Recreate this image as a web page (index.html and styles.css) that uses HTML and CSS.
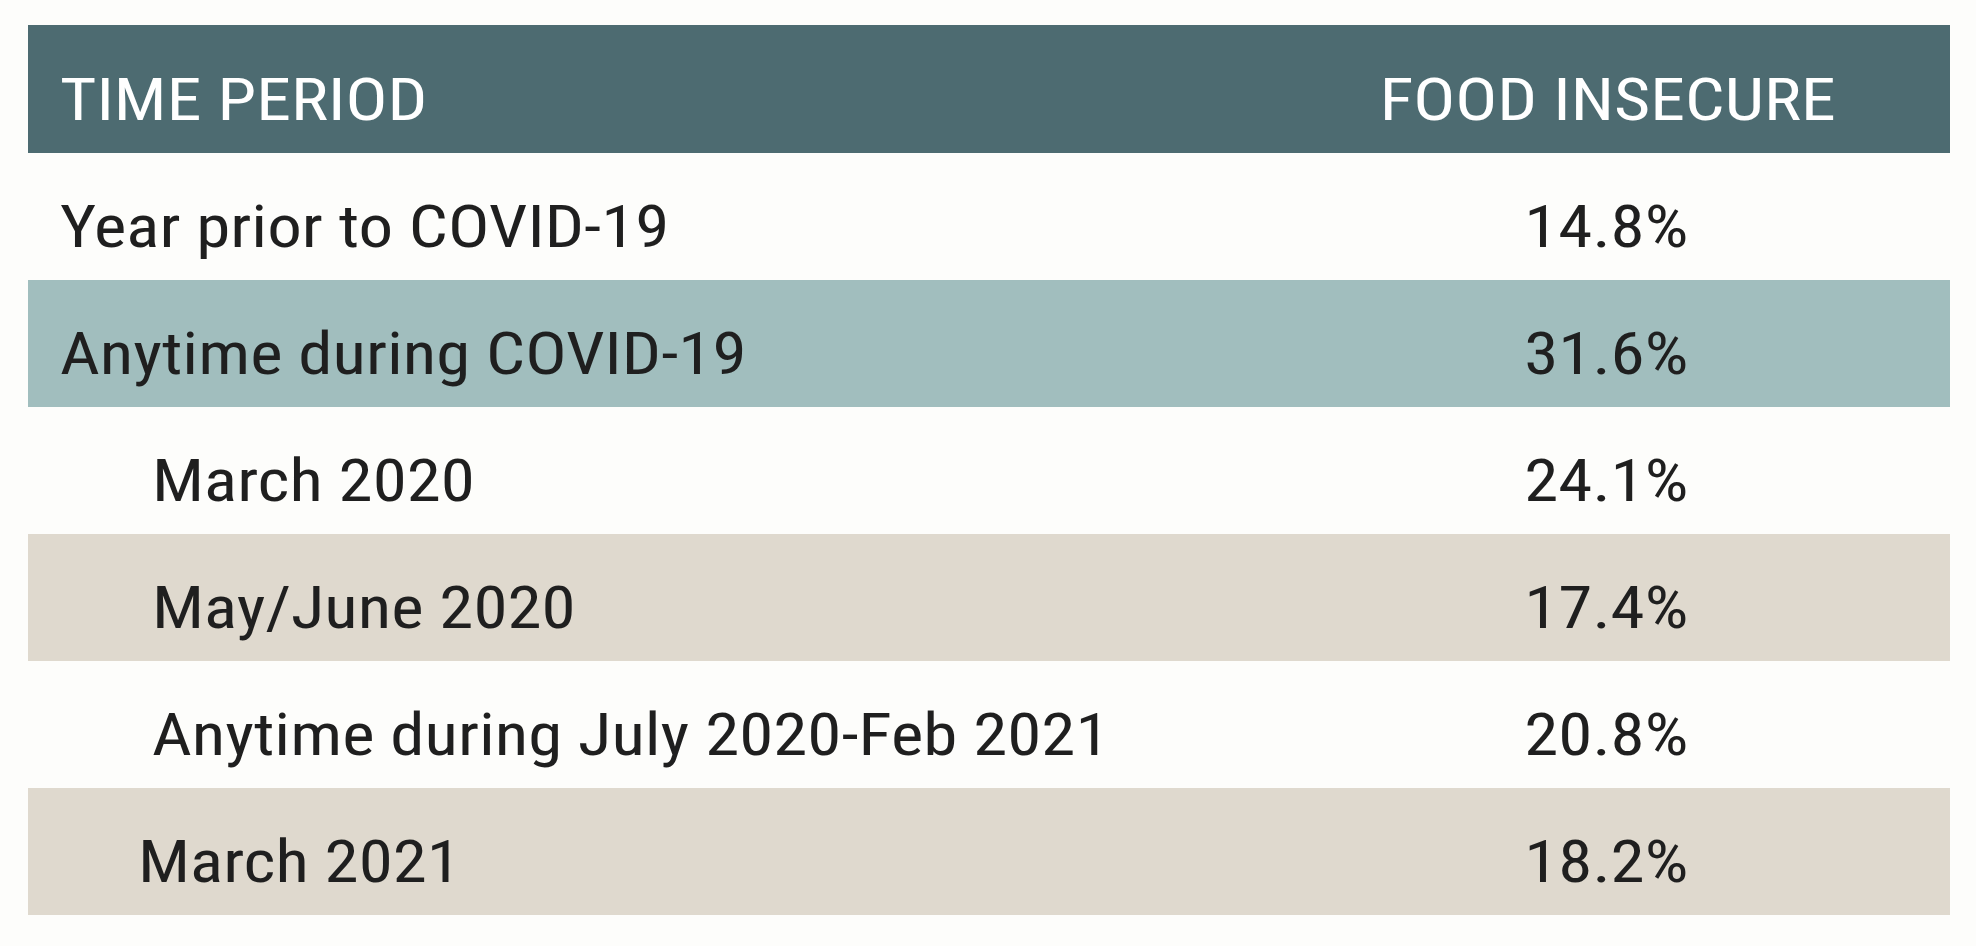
FILE: index.html
```html
<!DOCTYPE html>
<html lang="en">
<head>
<meta charset="utf-8">
<title>Food insecurity by time period</title>
<link rel="stylesheet" href="styles.css">
</head>
<body>
<div class="table">
  <div class="row head">
    <div class="cell label"><span class="txt">TIME PERIOD</span></div>
    <div class="cell value"><span class="txt">FOOD INSECURE</span></div>
  </div>
  <div class="row">
    <div class="cell label"><span class="txt">Year prior to COVID-19</span></div>
    <div class="cell value"><span class="txt">14.8%</span></div>
  </div>
  <div class="row blue">
    <div class="cell label"><span class="txt">Anytime during COVID-19</span></div>
    <div class="cell value"><span class="txt">31.6%</span></div>
  </div>
  <div class="row">
    <div class="cell label indent"><span class="txt">March 2020</span></div>
    <div class="cell value"><span class="txt">24.1%</span></div>
  </div>
  <div class="row beige">
    <div class="cell label indent"><span class="txt">May/June 2020</span></div>
    <div class="cell value"><span class="txt">17.4%</span></div>
  </div>
  <div class="row">
    <div class="cell label indent"><span class="txt">Anytime during July 2020-Feb 2021</span></div>
    <div class="cell value"><span class="txt">20.8%</span></div>
  </div>
  <div class="row beige">
    <div class="cell label indent-small"><span class="txt">March 2021</span></div>
    <div class="cell value"><span class="txt">18.2%</span></div>
  </div>
</div>
</body>
</html>
```
FILE: styles.css
```css
html, body {
  margin: 0;
  padding: 0;
  background: #fdfdfb;
}
body {
  font-family: "Roboto Condensed", "Liberation Sans Narrow", "DejaVu Sans Condensed", Roboto, sans-serif;
  color: #1f1f1f;
}
.table {
  margin: 25px 0 0 28px;
  width: 1922px;
  display: flex;
  flex-direction: column;
}
.row {
  display: grid;
  grid-template-columns: 1fr 686px;
  height: 127px;
  font-size: 60px;
}
.row.head {
  background: #4d6b71;
  color: #ffffff;
  height: 128px;
}
.row.blue { background: #a1bebe; }
.row.beige { background: #dfd9ce; }
.cell {
  display: flex;
  align-items: center;
  padding-top: 20px;
  box-sizing: border-box;
  white-space: nowrap;
}
.txt {
  display: inline-block;
  transform: scaleX(1.15);
}
.head .txt { transform: scaleX(1.165); }
.label .txt { transform-origin: left center; }
.value .txt { transform-origin: center center; }
.label { padding-left: 32px; }
.label.indent { padding-left: 124px; }
.label.indent-small { padding-left: 110px; }
.value { justify-content: center; padding-right: 1px; }
.head .value { padding-right: 0; padding-left: 2px; }
```
